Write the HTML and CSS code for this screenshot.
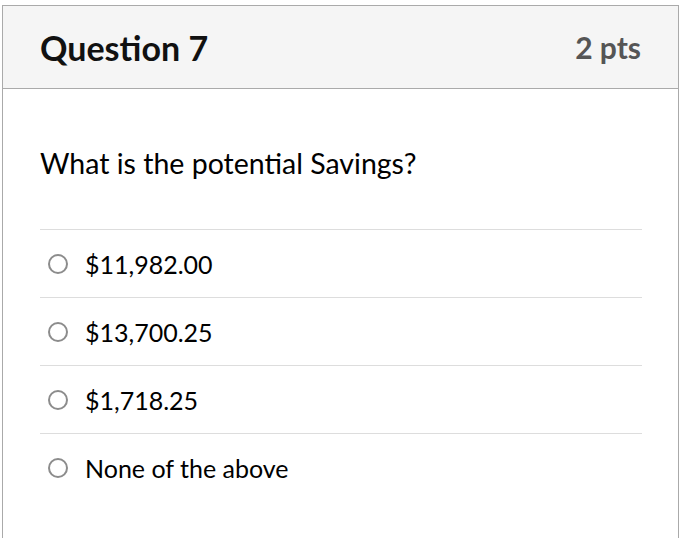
FILE: index.html
```html
<!DOCTYPE html>
<html>
<head>
<meta charset="utf-8">
<link rel="stylesheet" href="styles.css">
</head>
<body>
<div class="card">
  <div class="header">
    <span class="title">Question 7</span>
    <span class="pts">2 pts</span>
  </div>
  <div class="content">
    <div class="question">What is the potential Savings?</div>
    <div class="answers">
      <div class="answer"><span class="radio"></span><span class="label">$11,982.00</span></div>
      <div class="answer"><span class="radio"></span><span class="label">$13,700.25</span></div>
      <div class="answer"><span class="radio"></span><span class="label">$1,718.25</span></div>
      <div class="answer"><span class="radio"></span><span class="label">None of the above</span></div>
    </div>
  </div>
</div>
</body>
</html>
```
FILE: styles.css
```css
html, body {
  margin: 0;
  padding: 0;
  background: #fff;
  font-family: Lato, "Liberation Sans", sans-serif;
  color: #000;
}
.card {
  margin: 5px 0 0 2px;
  width: 675px;
  border: 1px solid #aaaaaa;
  border-bottom: none;
  height: 560px;
}
.header {
  background: #f5f5f5;
  border-bottom: 1px solid #aaaaaa;
  height: 82px;
  display: flex;
  align-items: center;
  justify-content: space-between;
  padding: 0 37px 0 37px;
}
.title {
  font-size: 34px;
  font-weight: 700;
  color: #111;
}
.pts {
  font-size: 30px;
  font-weight: 700;
  color: #555;
}
.content {
  padding: 0 36px 0 37px;
}
.question {
  font-size: 28.5px;
  line-height: 34px;
  padding-top: 57px;
  padding-bottom: 49px;
}
.answer {
  border-top: 1px solid #dddddd;
  height: 67px;
  display: flex;
  align-items: center;
}
.radio {
  box-sizing: border-box;
  width: 20px;
  height: 20px;
  border: 2px solid #8c8c8c;
  border-radius: 50%;
  margin-left: 8px;
  margin-right: 17px;
  flex: none;
}
.label {
  font-size: 25px;
  line-height: 30px;
}
```
